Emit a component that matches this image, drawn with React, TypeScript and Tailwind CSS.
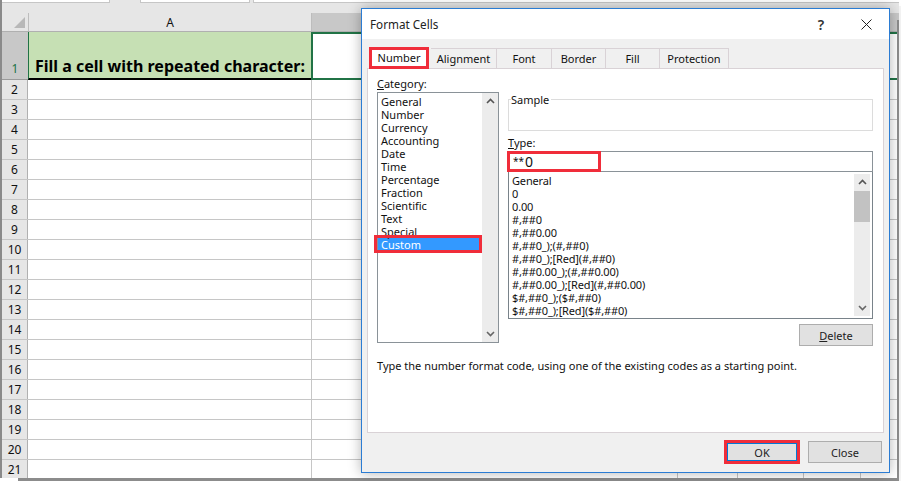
import React from "react";

const rowNums = Array.from({ length: 20 }, (_, i) => i + 2);
const categories = ["General","Number","Currency","Accounting","Date","Time","Percentage","Fraction","Scientific","Text","Special"];
const types = ["General","0","0.00","#,##0","#,##0.00","#,##0_);(#,##0)","#,##0_);[Red](#,##0)","#,##0.00_);(#,##0.00)","#,##0.00_);[Red](#,##0.00)","$#,##0_);($#,##0)","$#,##0_);[Red]($#,##0)"];
const tabs: [string, string][] = [["Alignment","w-[66px]"],["Font","w-[55px]"],["Border","w-[54px]"],["Fill","w-[54px]"],["Protection","w-[69px]"]];

function Cols({ cls }: { cls: string }) {
  return (
    <>
      <div className={"w-[366px] shrink-0 border-r border-[#c6c6c6] " + cls} />
      <div className={"w-[60px] shrink-0 border-r border-[#c6c6c6] " + cls} />
      <div className={"w-[66px] shrink-0 border-r border-[#c6c6c6] " + cls} />
      <div className={"w-[57px] shrink-0 border-r border-[#c6c6c6] " + cls} />
      <div className={"flex-1 " + cls} />
    </>
  );
}

function Chevron({ up }: { up?: boolean }) {
  return (
    <svg width="9" height="6" viewBox="0 0 9 6" className="block">
      <path d={up ? "M1 5 L4.5 1.5 L8 5" : "M1 1 L4.5 4.5 L8 1"} fill="none" stroke={up ? "#555" : "#666"} strokeWidth="1.6" />
    </svg>
  );
}

export default function App() {
  return (
    <div className="relative w-[901px] h-[481px] overflow-hidden bg-white text-[11px] leading-[13px] text-[#111]" style={{ fontFamily: '"Noto Sans", sans-serif' }}>
      {/* sheet */}
      <div className="flex flex-col w-[899px] h-[478px] ml-0 border-l-2 border-[#8a8a8a] bg-white overflow-hidden">
        <div className="flex h-[13px] shrink-0 bg-[#e6e6e6]">
          <div className="w-[108px] h-[3px] bg-white border-b border-r border-[#c6c6c6]" />
          <div className="w-[30px]" />
          <div className="w-[110px] h-[3px] bg-white border-b border-x border-[#c6c6c6]" />
          <div className="w-[3px]" />
          <div className="flex-1 h-[3px] bg-white border-b border-l border-[#c6c6c6]" />
        </div>
        {/* column header */}
        <div className="flex h-[19px] shrink-0 bg-[#e6e6e6] border-b border-[#b0b0b0]">
          <div className="w-[26px] shrink-0 flex items-end justify-end pr-[3px] pb-[3px]">
            <svg width="11" height="11" viewBox="0 0 11 11"><path d="M11 0V11H0Z" fill="#b8b8b8" /></svg>
          </div>
          <div className="w-[284px] shrink-0 text-center text-[12px] leading-[19px] border-l border-r border-[#bdbdbd]">A</div>
          <div className="flex-1 bg-[#c8c8c8]" />
        </div>
        {/* row 1 */}
        <div className="flex h-[48px] shrink-0">
          <div className="w-[26px] shrink-0 bg-[#c8c8c8] flex items-end justify-center pb-[3px] text-[12px] leading-[15px] text-[#217346] border-b border-[#9a9a9a]">1</div>
          <div className="w-[284px] shrink-0 bg-[#c6e0b4] border-l border-l-[#217346] border-b-2 border-b-black flex items-end pl-[6px] pb-[2px] text-[16px] leading-[20px] font-bold text-black whitespace-nowrap">Fill a cell with repeated character:</div>
          <div className="flex-1 border-2 border-[#217346] bg-white -ml-px" />
        </div>
        {/* rows */}
        {rowNums.map((n) => (
          <div key={n} className="flex h-[20px] shrink-0 border-b border-[#c6c6c6]">
            <div className="w-[26px] shrink-0 bg-[#e6e6e6] text-center text-[12px] leading-[20px] border-r border-[#b0b0b0]">{n}</div>
            <div className="w-[284px] shrink-0 border-r border-[#c6c6c6]" />
            <Cols cls="" />
          </div>
        ))}
      </div>
      <div className="absolute right-0 top-[6px] bottom-0 w-[2px] bg-[#f4f4f4]" />
      <div className="absolute left-[18px] right-[2px] bottom-0 h-[3px] bg-[#8c8c8c]" />
      <div className="absolute right-[2px] top-[20px] bottom-0 w-[2px] bg-[#8c8c8c]" />

      {/* dialog */}
      <div className="absolute left-[361px] top-[8px] w-[529px] h-[465px] flex flex-col bg-[#f0f0f0] border border-[#2b7cd3] shadow-[0_0_12px_rgba(0,0,0,0.3)]">
        <div className="h-[30px] mb-[1px] shrink-0 bg-white flex items-center pl-[8px] text-[11.7px] text-[#222]">
          <span className="flex-1">Format Cells</span>
          <span className="w-[14px] text-center text-[14px] font-semibold mr-[33px] text-[#333]">?</span>
          <svg width="11" height="11" viewBox="0 0 11 11" className="mr-[17px]"><path d="M.5.5l10 10M10.5.5l-10 10" stroke="#222" strokeWidth="1" fill="none" /></svg>
        </div>
        {/* tabs */}
        <div className="flex h-[21px] shrink-0 mt-[7px] pl-[7px] items-end">
          <div className="relative w-[60px] h-[22px] bg-white flex items-center justify-center border-[3px] border-[#f02d3a] z-10 -mb-[1px] pb-[1px]">Number</div>
          <div className="w-[2px]" />
          {tabs.map(([t, w]) => (
            <div key={t} className={w + " h-[20px] flex items-center justify-center border border-b-0 border-l-0 first:border-l border-[#d9d2d6] bg-[#f0f0f0]"}>{t}</div>
          ))}
        </div>
        {/* panel */}
        <div className="relative mx-[5px] h-[365px] shrink-0 bg-white border border-[#d9d2d6] pl-[9px] pr-[6px]">
          <div className="flex gap-[9px] pr-[1px]">
            <div className="w-[122px] shrink-0 pt-[8px]">
              <div className="h-[14px]"><span className="underline">C</span>ategory:</div>
              <div className="relative h-[251px] mt-[1px] border border-[#8a9298] flex bg-white">
                <div className="flex-1 pt-[2px]">
                  {categories.map((c) => (
                    <div key={c} className="h-[13px] pl-[3px]">{c}</div>
                  ))}
                  <div className="h-[13px] pl-[3px] bg-[#3399ff] text-white">Custom</div>
                </div>
                <div className="w-[16px] bg-[#ececec] flex flex-col justify-between items-center py-[5px]">
                  <Chevron up />
                  <Chevron />
                </div>
                <div className="absolute left-[-4px] top-[142px] w-[108px] h-[18px] border-[3px] border-[#f02d3a]" />
              </div>
            </div>
            <div className="flex-1 min-w-0 pt-[24px] pr-[3px]">
              <fieldset className="h-[38px] border border-[#dcdcdc] px-[1px]">
                <legend className="px-0 ml-[1px] leading-[13px] pr-[2px]">Sample</legend>
              </fieldset>
              <div className="mt-[5px] h-[14px]"><span className="underline">T</span>ype:</div>
              <div className="relative h-[21px] -ml-px mt-[1px] w-[366px] border border-[#8a9298] flex items-center pl-[5px] text-[14px]">
                <span className="text-[10px] mt-[-1px] mr-[1px]">**</span><span>0</span>
                <div className="absolute -left-px -top-px w-[94px] h-[21px] border-[3px] border-[#f02d3a]" />
              </div>
              <div className="h-[148px] -mt-px border border-[#79838a] flex bg-white">
                <div className="flex-1 pt-[2px] pl-[3px] overflow-hidden tracking-[-0.15px]">
                  {types.map((t) => (
                    <div key={t} className="h-[13px] whitespace-nowrap">{t}</div>
                  ))}
                </div>
                <div className="relative w-[16px] bg-[#ececec] flex flex-col justify-between items-center py-[5px] mr-[2px] my-[2px]">
                  <Chevron up />
                  <div className="absolute left-0 right-0 top-[17px] h-[31px] bg-[#c2c2c2]" />
                  <Chevron />
                </div>
              </div>
              <div className="flex justify-end mt-[5px]">
                <div className="w-[74px] h-[22px] bg-[#e1e1e1] border border-[#adadad] flex items-center justify-center text-[#222]"><span><span className="underline">D</span>elete</span></div>
              </div>
            </div>
          </div>
          <div className="mt-[13px]">Type the number format code, using one of the existing codes as a starting point.</div>
        </div>
        {/* footer */}
        <div className="flex justify-end gap-[8px] pr-[7px] mt-[7px] text-[#222]">
          <div className="relative w-[76px] h-[24px] border-[3px] border-[#f02d3a] flex">
            <div className="flex-1 bg-[#e1e1e1] border border-[#0078d7] flex items-center justify-center">OK</div>
          </div>
          <div className="w-[74px] h-[22px] mt-[1px] bg-[#e1e1e1] border border-[#adadad] flex items-center justify-center">Close</div>
        </div>
      </div>
    </div>
  );
}
